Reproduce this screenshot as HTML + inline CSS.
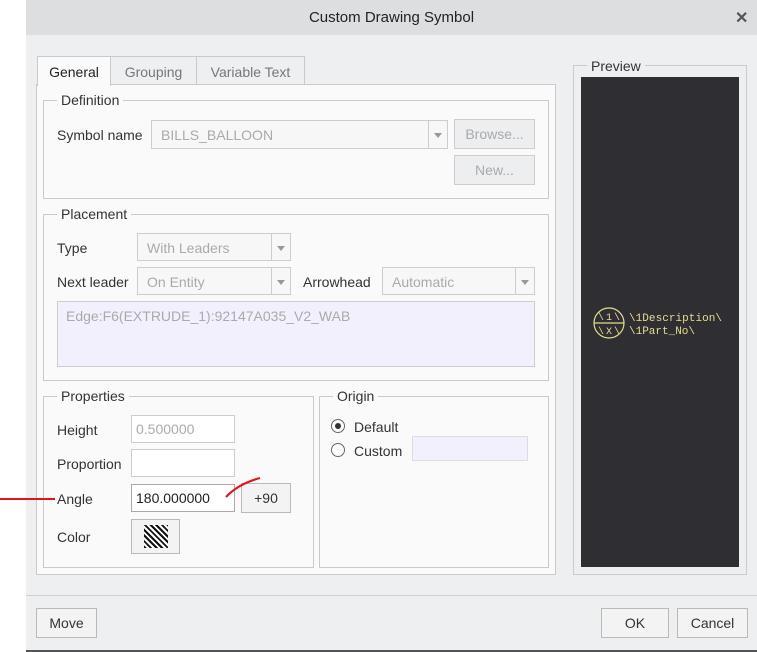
<!DOCTYPE html>
<html><head><style>
*{box-sizing:border-box;margin:0;padding:0}
body{width:757px;height:652px;background:#fff;font-family:"Liberation Sans",sans-serif;font-size:14px;color:#333;position:relative;overflow:hidden}
.a{position:absolute}
.grp{position:absolute;border:1px solid #c9cacc;background:#fafafa}
.lg{position:absolute;background:#fafafa;padding:0 4px;color:#333;top:-10px;left:13px;font-size:14px;line-height:18px}
.lbl{position:absolute;color:#333;line-height:18px}
.box{position:absolute;border:1px solid #cdcdcd;background:#f7f7f7;color:#aaa;padding-left:9px;line-height:28px}
.dd{position:absolute;right:0;top:0;bottom:0;width:19px;border-left:1px solid #cdcdcd}
.dd:after{content:"";position:absolute;left:5px;top:12px;border-left:4px solid transparent;border-right:4px solid transparent;border-top:5px solid #999}
.btn{position:absolute;border:1px solid #b9b9b9;background:#f3f3f3;text-align:center;color:#333}
.dbtn{position:absolute;border:1px solid #cdcdcd;background:#eceef0;text-align:center;color:#aaa}
</style></head><body>
<div class="a" style="left:26px;top:0;width:731px;height:652px;background:#eeeff1"></div>
<div class="a" style="left:26px;top:0;width:731px;height:35px;background:#dcdee0"></div>
<div class="a" style="left:26px;top:0;width:731px;height:35px;line-height:36px;text-align:center;font-size:15px;color:#222">Custom Drawing Symbol</div>
<div class="a" style="left:735px;top:8px;font-size:16px;font-weight:bold;color:#555">✕</div>

<div class="a" style="left:36px;top:84px;width:520px;height:491px;border:1px solid #c9cacc;background:#fafafa"></div>
<div class="a" style="left:37px;top:56px;width:74px;height:30px;border:1px solid #c9cacc;border-bottom:none;background:#fafafa;text-align:center;line-height:30px;color:#222">General</div>
<div class="a" style="left:110px;top:56px;width:87px;height:29px;border:1px solid #c9cacc;background:#eeeff1;text-align:center;line-height:30px;color:#777">Grouping</div>
<div class="a" style="left:196px;top:56px;width:109px;height:29px;border:1px solid #c9cacc;background:#eeeff1;text-align:center;line-height:30px;color:#777">Variable Text</div>

<div class="grp" style="left:43px;top:100px;width:506px;height:99px"><div class="lg">Definition</div></div>
<div class="lbl" style="left:57px;top:126px">Symbol name</div>
<div class="box" style="left:151px;top:120px;width:297px;height:29px">BILLS_BALLOON<div class="dd"></div></div>
<div class="dbtn" style="left:454px;top:119px;width:81px;height:30px;line-height:29px">Browse...</div>
<div class="dbtn" style="left:454px;top:155px;width:81px;height:30px;line-height:29px">New...</div>

<div class="grp" style="left:43px;top:214px;width:506px;height:167px"><div class="lg">Placement</div></div>
<div class="lbl" style="left:57px;top:239px">Type</div>
<div class="box" style="left:137px;top:233px;width:154px;height:28px">With Leaders<div class="dd"></div></div>
<div class="lbl" style="left:57px;top:273px">Next leader</div>
<div class="box" style="left:137px;top:267px;width:154px;height:28px">On Entity<div class="dd"></div></div>
<div class="lbl" style="left:303px;top:273px">Arrowhead</div>
<div class="box" style="left:382px;top:267px;width:153px;height:28px">Automatic<div class="dd"></div></div>
<div class="a" style="left:57px;top:301px;width:478px;height:66px;border:1px solid #cdcdcd;background:#f3f0fd;color:#aaa;padding:4px 0 0 8px;line-height:20px">Edge:F6(EXTRUDE_1):92147A035_V2_WAB</div>

<div class="grp" style="left:43px;top:396px;width:271px;height:172px"><div class="lg">Properties</div></div>
<div class="lbl" style="left:57px;top:421px">Height</div>
<div class="a" style="left:131px;top:415px;width:104px;height:28px;border:1px solid #cdcdcd;background:#fff;color:#aaa;padding-left:4px;line-height:27px">0.500000</div>
<div class="lbl" style="left:57px;top:455px">Proportion</div>
<div class="a" style="left:131px;top:449px;width:104px;height:28px;border:1px solid #cdcdcd;background:#fff"></div>
<div class="lbl" style="left:57px;top:490px">Angle</div>
<div class="a" style="left:131px;top:484px;width:104px;height:28px;border:1px solid #aaa;background:#fff;color:#222;padding-left:4px;line-height:27px">180.000000</div>
<div class="btn" style="left:241px;top:483px;width:50px;height:30px;line-height:29px">+90</div>
<div class="lbl" style="left:57px;top:528px">Color</div>
<div class="btn" style="left:131px;top:519px;width:49px;height:35px"><div style="position:absolute;left:12px;top:5px;width:24px;height:23px;background:repeating-linear-gradient(45deg,#111 0 2px,#fff 2px 4px)"></div></div>
<svg class="a" style="left:0;top:470px" width="270" height="40"><path d="M0 29 H55" stroke="#e2141b" stroke-width="2" fill="none"/><path d="M226 27 Q238 14 260 8" stroke="#e2141b" stroke-width="2.2" fill="none"/></svg>

<div class="grp" style="left:319px;top:396px;width:230px;height:172px"><div class="lg">Origin</div></div>
<div class="a" style="left:331px;top:419px;width:14px;height:14px;border:1px solid #666;border-radius:50%;background:#fff"><div style="position:absolute;left:3px;top:3px;width:6px;height:6px;border-radius:50%;background:#333"></div></div>
<div class="lbl" style="left:354px;top:418px">Default</div>
<div class="a" style="left:331px;top:443px;width:14px;height:14px;border:1px solid #666;border-radius:50%;background:#fff"></div>
<div class="lbl" style="left:354px;top:442px">Custom</div>
<div class="a" style="left:412px;top:436px;width:116px;height:25px;border:1px solid #ddd;background:#f3f0fd"></div>

<div class="a" style="left:573px;top:65px;width:174px;height:510px;border:1px solid #c9cacc;background:#eeeff1"></div>
<div class="a" style="left:587px;top:57px;background:#eeeff1;padding:0 4px;line-height:18px;color:#333">Preview</div>
<div class="a" style="left:581px;top:77px;width:158px;height:490px;background:#2f2e33"></div>
<svg class="a" style="left:590px;top:300px" width="150" height="40"><g stroke="#e8dc8e" stroke-width="1.2" fill="none"><circle cx="19" cy="23" r="15"/><path d="M4 23H34"/></g>
<text x="39" y="21" fill="#e8dc8e" font-family="Liberation Mono,monospace" font-size="11" textLength="93">\1Description\</text>
<text x="39" y="34" fill="#e8dc8e" font-family="Liberation Mono,monospace" font-size="11" textLength="66">\1Part_No\</text>
<text x="8" y="20" fill="#e8dc8e" font-family="Liberation Mono,monospace" font-size="10" textLength="22">\1\</text>
<text x="8" y="34" fill="#e8dc8e" font-family="Liberation Mono,monospace" font-size="10" textLength="22">\X\</text></svg>

<div class="a" style="left:26px;top:595px;width:731px;height:1px;background:#cfd0d2"></div>
<div class="btn" style="left:36px;top:608px;width:61px;height:30px;line-height:29px">Move</div>
<div class="btn" style="left:601px;top:608px;width:68px;height:30px;line-height:29px">OK</div>
<div class="btn" style="left:677px;top:608px;width:71px;height:30px;line-height:29px">Cancel</div>
<div class="a" style="left:26px;top:650px;width:731px;height:2px;background:#555"></div>
</body></html>
